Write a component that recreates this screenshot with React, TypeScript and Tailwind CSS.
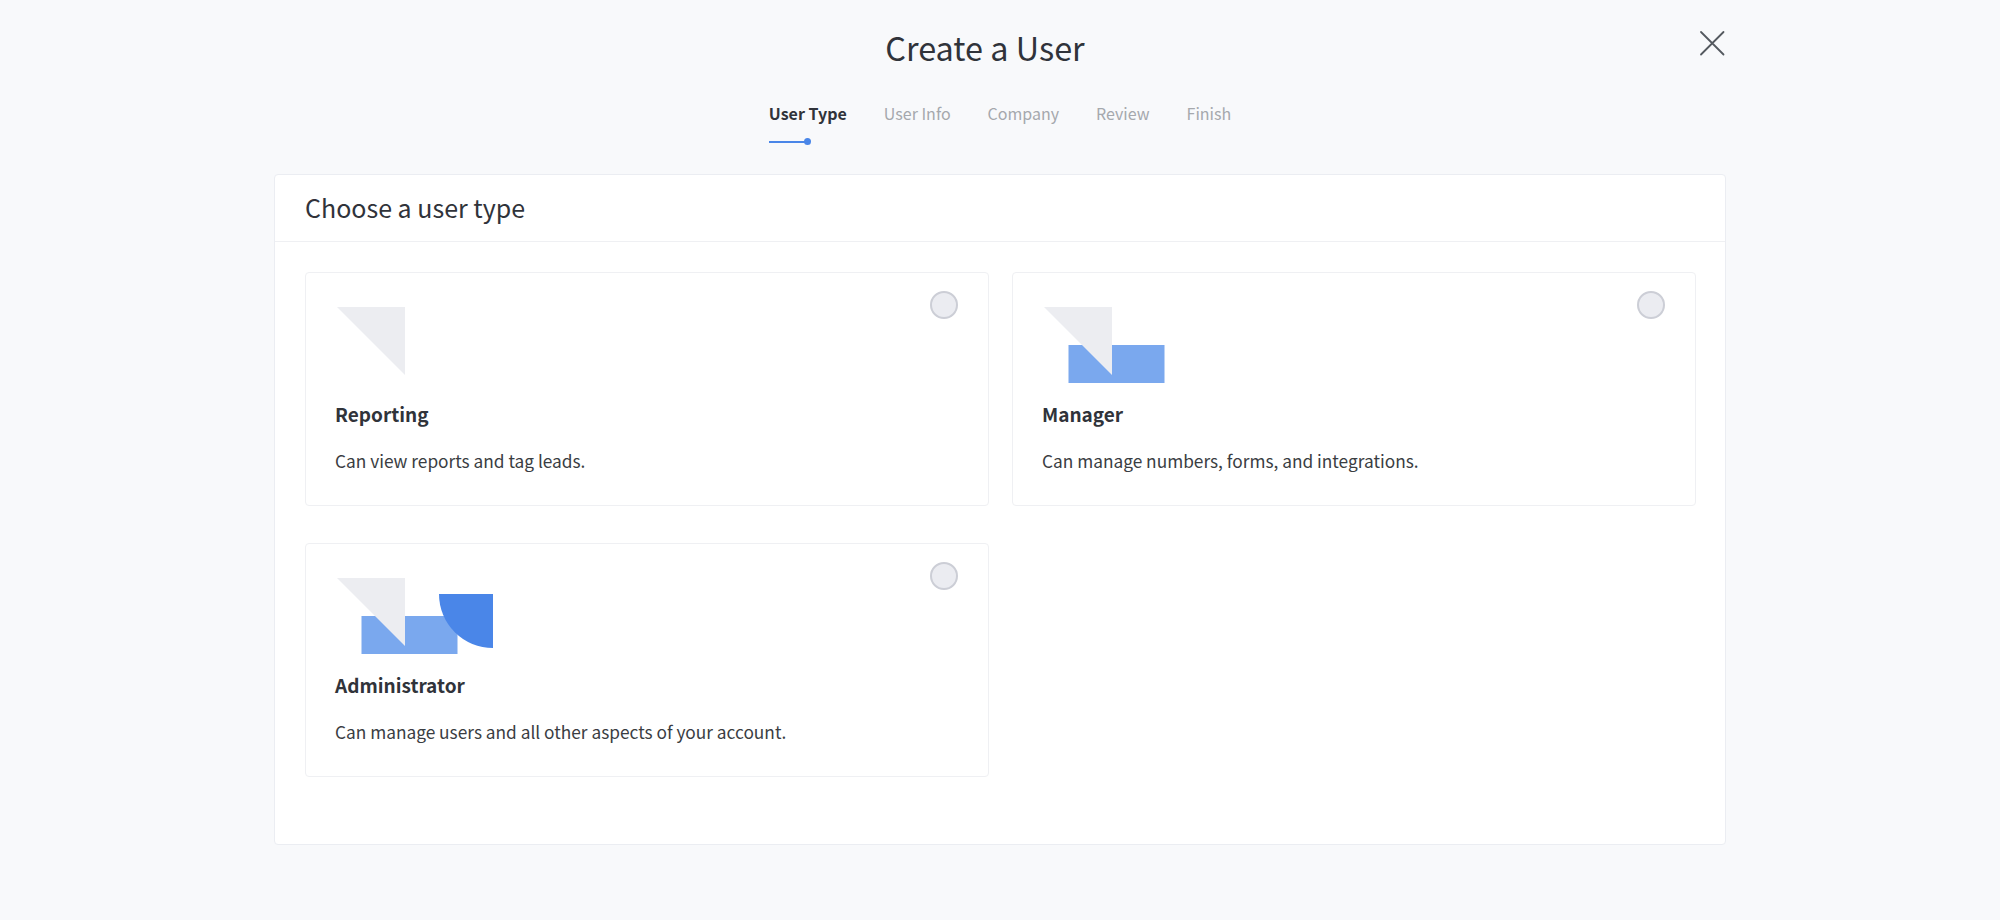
const font = { fontFamily: '"Noto Sans CJK SC", "Open Sans", sans-serif' };

const steps = ["User Type", "User Info", "Company", "Review", "Finish"];

const userTypes = [
    { name: "Reporting", text: "Can view reports and tag leads.", level: 1 },
    { name: "Manager", text: "Can manage numbers, forms, and integrations.", level: 2 },
    { name: "Administrator", text: "Can manage users and all other aspects of your account.", level: 3 },
];

const TypeIcon = ({ level }: { level: number }) => (
    <svg width="160" height="76" viewBox="0 0 160 76" className="block">
        {level >= 2 && <rect x="26.5" y="38" width="96" height="38" fill="#7aa8ee" />}
        <path d="M2 0H70V68Z" fill="#ecedf1" />
        {level >= 3 && <path d="M104 16H158V70A54 54 0 0 1 104 16Z" fill="#4a86e8" />}
    </svg>
);

export default function App() {
    return (
        <div className="min-h-[920px] bg-[#f8f9fb] text-[#30333a]">
            <div className="mx-auto w-[1452px] pt-[18px]">
                {/* title + close */}
                <div className="flex items-start h-[54px]">
                    <h1 className="flex-1 mt-[2px] text-center text-[32.4px] leading-[54px] font-normal" style={font}>
                        Create a User
                    </h1>
                    <button className="mt-[10px] w-[30px] text-[#54595f]">
                        <svg width="30" height="30" viewBox="0 0 30 30" fill="none" stroke="currentColor" strokeWidth="1.8" strokeLinecap="round" className="block">
                            <path d="M5 4 27.500 26.500M27.500 4 5 26.500" />
                        </svg>
                    </button>
                </div>

                {/* steps */}
                <div className="flex justify-center gap-[37px] mt-[28px] h-[74px] text-[16px] leading-[27px]" style={font}>
                    {steps.map((s, i) => (
                        <div key={s} className={i === 0 ? "font-semibold text-[#30333a]" : "text-[#a5a8ad]"}>
                            {s}
                            {i === 0 && (
                                <div className="flex items-center mt-[11px]">
                                    <div className="h-[2px] w-[38px] bg-[#4a86e8]" />
                                    <div className="h-[7px] w-[7px] -ml-[3px] rounded-full bg-[#4a86e8]" />
                                </div>
                            )}
                        </div>
                    ))}
                </div>

                {/* panel */}
                <div className="h-[671px] bg-white border border-[#ebedf2] rounded-[4px]" style={font}>
                    <div className="h-[67px] flex items-center pl-[30px] pr-[29px] pb-[1px] border-b border-[#eff0f3]">
                        <h2 className="text-[25px] font-normal">Choose a user type</h2>
                    </div>
                    <div className="grid grid-cols-2 gap-x-[23px] gap-y-[37px] pl-[30px] pr-[29px] pt-[30px]">
                        {userTypes.map((t) => (
                            <div key={t.name} className="h-[234px] flex justify-between border border-[#eff0f3] rounded-[4px] pl-[29px] pr-[30px] pt-[18px]">
                                <div className="pt-[16px]">
                                    <TypeIcon level={t.level} />
                                    <div className="mt-[16px] text-[19px] leading-[30px] font-semibold">{t.name}</div>
                                    <div className="mt-[18px] text-[17.3px] leading-[27px] text-[#3a3d42]">{t.text}</div>
                                </div>
                                <div className="h-[28px] w-[28px] rounded-full bg-[#ebecf1] border-2 border-[#ccced6]" />
                            </div>
                        ))}
                    </div>
                </div>
            </div>
        </div>
    );
}
